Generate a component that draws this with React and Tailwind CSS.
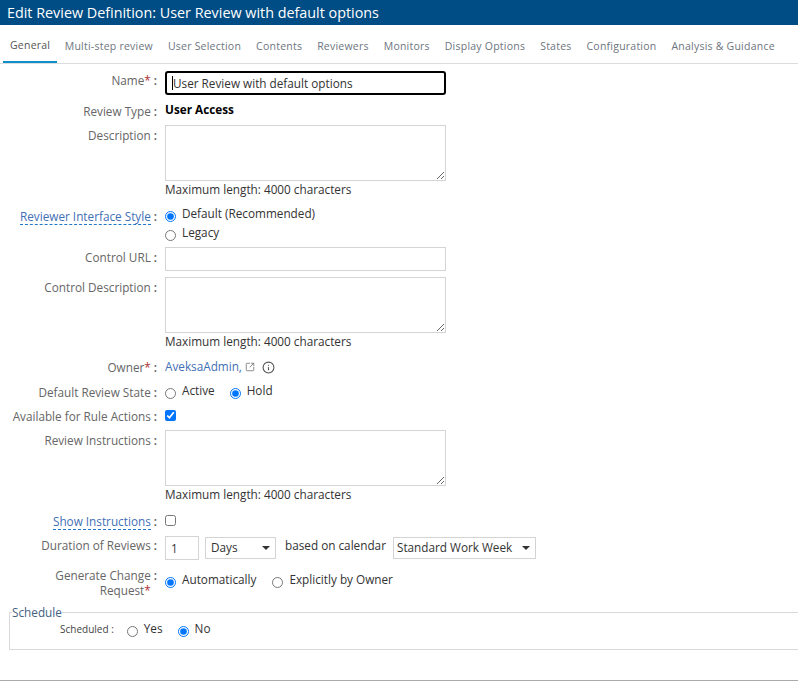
import { SquareArrowOutUpRight, Info } from "lucide-react";

const tabs = [
  "General",
  "Multi-step review",
  "User Selection",
  "Contents",
  "Reviewers",
  "Monitors",
  "Display Options",
  "States",
  "Configuration",
  "Analysis & Guidance",
];

function Row({ label, required, link, className = "", labelClass = "", children }) {
  return (
    <div className={`flex ${className}`}>
      <div className={`w-[157px] shrink-0 flex justify-end items-start text-[#666666] ${labelClass}`}>
        <span className={link ? "text-[#3f6fb5] border-b border-dashed border-[#1f77c9] leading-[15px] text-right" : "leading-[15px] text-right"}>
          {label}
          {required && <span className="text-[#b03030]">*</span>}
        </span>
        <span className="leading-[15px] ml-[3px] font-semibold text-[#555555]">:</span>
      </div>
      <div className="ml-[8px] flex-1 min-w-0">{children}</div>
    </div>
  );
}

function Radio({ label, name, checked, className = "" }) {
  return (
    <label className={`inline-flex items-start text-[#333333] ${className}`}>
      <input type="radio" name={name} defaultChecked={checked} className="w-[11px] h-[11px] m-0 mt-[5px] mr-[6px]" />
      <span className="leading-[16px] -mt-[1px]">{label}</span>
    </label>
  );
}

function TextBox() {
  return (
    <>
      <textarea className="block w-[281px] h-[56px] border border-[#d4d4d4] bg-white outline-none" />
      <div className="leading-[16px] text-[#333333]">Maximum length: 4000 characters</div>
    </>
  );
}

export default function App() {
  return (
    <div className="w-[798px] h-[683px] overflow-hidden bg-white text-[11.75px] font-['Open_Sans',sans-serif] flex flex-col">
      <div className="h-[25px] shrink-0 bg-[#004c84] text-white text-[14.35px] leading-[25px] pl-[7px]">
        Edit Review Definition: User Review with default options
      </div>

      <div className="h-[39px] shrink-0 flex border-b border-[#dddddd] pl-[3px] text-[10.5px] tracking-[0.23px] text-[#6d7580] whitespace-nowrap">
        {tabs.map((tab, i) => (
          <div
            key={tab}
            className={
              i === 0
                ? "h-[38px] px-[7px] pt-[12px] leading-[16px] border-b-[2px] border-[#0f8fc9] text-[#555555]"
                : "h-[38px] px-[7.5px] pt-[13px] leading-[16px]"
            }
          >
            {tab}
          </div>
        ))}
      </div>

      <div className="flex flex-col">
        <Row label="Name" required className="mt-[7px] items-start" labelClass="mt-[2px]">
          <div className="relative w-[281px]">
            <input
              defaultValue="User Review with default options"
              className="block w-[281px] h-[24px] border-2 border-black rounded-[3px] pl-[6px] text-[#333333] outline-none"
            />
            <span className="absolute left-[7px] top-[5px] w-px h-[14px] bg-black" />
          </div>
        </Row>
        <Row label="Review Type" className="mt-[8px]" labelClass="mt-[1px]">
          <div className="font-bold text-black leading-[14px] -mt-[1px]">User Access</div>
        </Row>
        <Row label="Description" className="mt-[6px]" labelClass="mt-[3px]">
          <TextBox />
        </Row>
        <Row label="Reviewer Interface Style" link className="mt-[9px]" labelClass="mt-[3px]">
          <div className="flex flex-col">
            <Radio label="Default (Recommended)" name="style" checked className="h-[19px]" />
            <Radio label="Legacy" name="style" className="h-[19px]" />
          </div>
        </Row>
        <Row label="Control URL" className="mt-[3px]" labelClass="mt-[3px]">
          <input className="block w-[281px] h-[24px] border border-[#d4d4d4] outline-none" />
        </Row>
        <Row label="Control Description" className="mt-[6px]" labelClass="mt-[3px]">
          <TextBox />
        </Row>
        <Row label="Owner" required className="mt-[10px]" labelClass="mt-[1px]">
          <div className="flex items-center h-[16px] text-[#3f6fb5]">
            AveksaAdmin,
            <SquareArrowOutUpRight className="w-[10px] h-[10px] ml-[3px] text-[#777777]" />
            <Info className="w-[13px] h-[13px] ml-[7px] text-[#555555]" />
          </div>
        </Row>
        <Row label="Default Review State" className="mt-[8px]" labelClass="mt-[2px]">
          <div className="flex">
            <Radio label="Active" name="state" />
            <Radio label="Hold" name="state" checked className="ml-[15px]" />
          </div>
        </Row>
        <Row label="Available for Rule Actions" className="mt-[9px]">
          <input type="checkbox" defaultChecked className="block w-[11px] h-[11px] m-0 mt-[1px]" />
        </Row>
        <Row label="Review Instructions" className="mt-[6px]" labelClass="mt-[3px]">
          <TextBox />
        </Row>
        <Row label="Show Instructions" link className="mt-[12px]">
          <input type="checkbox" className="block w-[11px] h-[11px] m-0 mt-[1px]" />
        </Row>
        <Row label="Duration of Reviews" className="mt-[6px]" labelClass="mt-[2px]">
          <div className="flex items-start text-[#333333]">
            <input defaultValue="1" className="block w-[34px] h-[24px] border border-[#d4d4d4] pl-[5px] outline-none" />
            <div className="ml-[6px] mt-[1px] w-[71px] h-[22px] border border-[#d4d4d4] flex items-center justify-between pl-[5px] pr-[4px]">
              Days
              <span className="w-0 h-0 mr-[1px] border-x-[4px] border-x-transparent border-t-[4px] border-t-[#333333]" />
            </div>
            <span className="ml-[9px] leading-[16px] mt-[1px]">based on calendar</span>
            <div className="ml-[7px] mt-[1px] w-[143px] h-[22px] border border-[#d4d4d4] flex items-center justify-between pl-[3px] pr-[4px]">
              Standard Work Week
              <span className="w-0 h-0 mr-[1px] border-x-[4px] border-x-transparent border-t-[4px] border-t-[#333333]" />
            </div>
          </div>
        </Row>
        <Row
          label={
            <>
              Generate Change
              <br />
              Request
            </>
          }
          required
          className="mt-[12px]"
          labelClass="-mt-[4px]"
        >
          <div className="flex">
            <Radio label="Automatically" name="change" checked />
            <Radio label="Explicitly by Owner" name="change" className="ml-[16px]" />
          </div>
        </Row>
      </div>

      <fieldset className="ml-[9px] mt-[6px] mr-[-10px] h-[46px] border border-[#d9d9d9] pl-[2px] shrink-0">
        <legend className="leading-[16px] text-[#44607f]">Schedule</legend>
        <div className="flex text-[10px] text-[#444444] pl-[48px] mt-[1px]">
          <span className="leading-[16px] mr-[13px]">Scheduled :</span>
          <Radio label="Yes" name="scheduled" className="text-[11.75px]" />
          <Radio label="No" name="scheduled" checked className="ml-[15px] text-[11.75px]" />
        </div>
      </fieldset>

      <div className="mt-[30px] border-t border-[#aaaaaa]" />
    </div>
  );
}
